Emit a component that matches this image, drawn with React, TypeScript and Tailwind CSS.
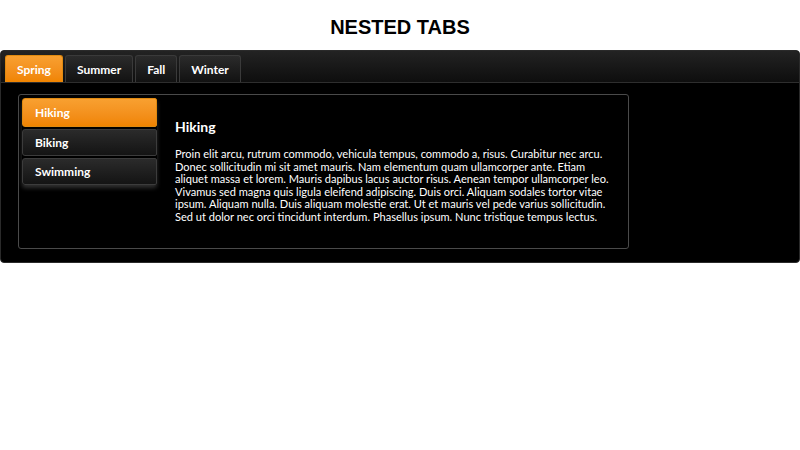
import { useState } from 'react';

const seasons = ['Spring', 'Summer', 'Fall', 'Winter'];
const activities = ['Hiking', 'Biking', 'Swimming'];

// body copy, one entry per rendered line
const copy = [
  'Proin elit arcu, rutrum commodo, vehicula tempus, commodo a, risus. Curabitur nec arcu.',
  'Donec sollicitudin mi sit amet mauris. Nam elementum quam ullamcorper ante. Etiam',
  'aliquet massa et lorem. Mauris dapibus lacus auctor risus. Aenean tempor ullamcorper leo.',
  'Vivamus sed magna quis ligula eleifend adipiscing. Duis orci. Aliquam sodales tortor vitae',
  'ipsum. Aliquam nulla. Duis aliquam molestie erat. Ut et mauris vel pede varius sollicitudin.',
  'Sed ut dolor nec orci tincidunt interdum. Phasellus ipsum. Nunc tristique tempus lectus.',
];

const font = { fontFamily: '"Segoe UI", Lato, "Open Sans", sans-serif' };

export default function App() {
  const [season, setSeason] = useState('Spring');
  const [activity, setActivity] = useState('Hiking');

  return (
    <div className="w-[800px] h-[450px] bg-white">
      <h1 className="pt-[12px] h-[50px] text-center text-[20px] font-bold text-black font-['Liberation_Sans',Arial,sans-serif]">
        NESTED TABS
      </h1>

      <div
        className="mx-0 h-[213px] rounded-[4px] border border-[#2a2a2a] bg-black overflow-hidden"
        style={font}
      >
        {/* season tab strip */}
        <div className="h-[32px] flex items-end gap-[2px] pl-[4px] border-b border-[#2e2e2e] bg-gradient-to-b from-[#232323] to-[#0e0e0e]">
          {seasons.map((s) => (
            <button
              key={s}
              type="button"
              onClick={() => setSeason(s)}
              className={`h-[27px] pt-[2px] px-[11px] rounded-t-[3px] border border-b-0 text-[12px] font-bold text-white ${
                season === s
                  ? 'bg-gradient-to-b from-[#f8a030] to-[#f08400] border-[#e08a10]'
                  : 'bg-gradient-to-b from-[#2b2b2b] to-[#121212] border-[#3a3a3a]'
              }`}
            >
              {s}
            </button>
          ))}
        </div>

        {/* season content */}
        <div className="pt-[11px] px-[17px]">
          <div className="w-[611px] h-[155px] rounded-[3px] border border-[#4a4a4a] flex p-[3px]">
            <div className="w-[135px] flex flex-col gap-[2px] self-start rounded-[3px] shadow-[0_3px_4px_rgba(60,60,60,0.8)]">
              {activities.map((a) => (
                <button
                  key={a}
                  type="button"
                  onClick={() => setActivity(a)}
                  className={`text-left pl-[12px] pt-[1px] rounded-l-[3px] rounded-r-[2px] border text-[12px] font-bold text-white ${
                    activity === a
                      ? 'h-[29px] bg-gradient-to-b from-[#f8a030] to-[#f08400] border-[#e08a10]'
                      : 'h-[27px] bg-gradient-to-b from-[#2b2b2b] to-[#141414] border-[#3c3c3c]'
                  }`}
                >
                  {a}
                </button>
              ))}
            </div>

            <div className="pl-[18px] pt-[20px] text-white">
              <h2 className="text-[14px] font-bold leading-[18px]">{activity}</h2>
              <div className="mt-[12px] text-[11.05px] leading-[12.6px]">
                {copy.map((line) => (
                  <div key={line} className="whitespace-nowrap">
                    {line}
                  </div>
                ))}
              </div>
            </div>
          </div>
        </div>
      </div>
    </div>
  );
}
